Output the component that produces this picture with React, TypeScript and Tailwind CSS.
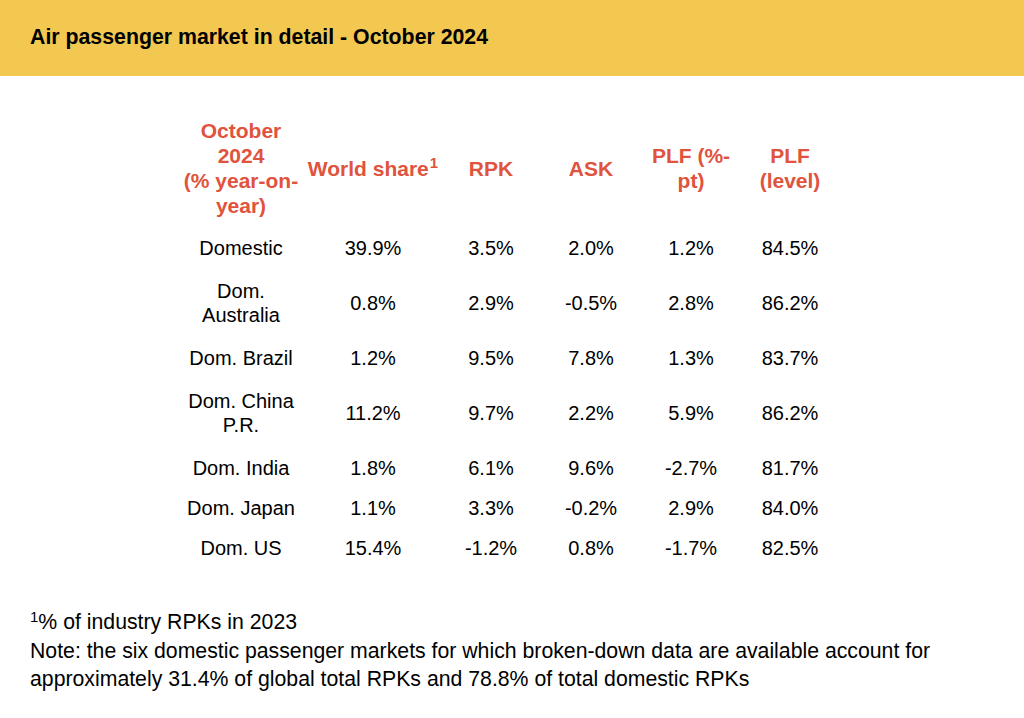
import React from "react"

type Row = {
  label: React.ReactNode
  tall?: boolean
  values: string[]
}

const rows: Row[] = [
  { label: "Domestic", values: ["39.9%", "3.5%", "2.0%", "1.2%", "84.5%"] },
  { label: <>Dom.<br />Australia</>, tall: true, values: ["0.8%", "2.9%", "-0.5%", "2.8%", "86.2%"] },
  { label: "Dom. Brazil", values: ["1.2%", "9.5%", "7.8%", "1.3%", "83.7%"] },
  { label: <>Dom. China<br />P.R.</>, tall: true, values: ["11.2%", "9.7%", "2.2%", "5.9%", "86.2%"] },
  { label: "Dom. India", values: ["1.8%", "6.1%", "9.6%", "-2.7%", "81.7%"] },
  { label: "Dom. Japan", values: ["1.1%", "3.3%", "-0.2%", "2.9%", "84.0%"] },
  { label: "Dom. US", values: ["15.4%", "-1.2%", "0.8%", "-1.7%", "82.5%"] },
]

const headers: React.ReactNode[] = [
  <>October<br />2024<br />(% year-on-<br />year)</>,
  <>World share<sup className="text-[15px] relative -top-[8px] ml-[1px]">1</sup></>,
  "RPK",
  "ASK",
  <>PLF (%-<br />pt)</>,
  <>PLF<br />(level)</>,
]

export default function App() {
  return (
    <div className="w-[1024px] h-[718px] bg-white text-black font-['Liberation_Sans',Arial,sans-serif] overflow-hidden">
      <div className="h-[76px] bg-[#F2C851] flex items-center px-[30px]">
        <h1 className="text-[21.3px] font-bold leading-none">Air passenger market in detail - October 2024</h1>
      </div>

      <div className="mt-[32px] ml-[180px] grid grid-cols-[122px_142px_94px_106px_94px_104px]">
        {headers.map((h, i) => (
          <div key={i} className="h-[120px] flex items-center justify-center text-center text-[21px] leading-[25px] font-bold text-[#E0533D] whitespace-nowrap">
            <span>{h}</span>
          </div>
        ))}
        {rows.map((r, ri) => (
          <React.Fragment key={ri}>
            <div className={`${r.tall ? "h-[70px]" : "h-[40px]"} flex items-center justify-center text-center text-[20px] leading-[24px] whitespace-nowrap`}>
              <span>{r.label}</span>
            </div>
            {r.values.map((v, vi) => (
              <div key={vi} className={`${r.tall ? "h-[70px]" : "h-[40px]"} flex items-center justify-center text-[20px] leading-[24px] whitespace-nowrap`}>
                {v}
              </div>
            ))}
          </React.Fragment>
        ))}
      </div>

      <div className="mt-[40px] px-[30px] text-[21.25px] leading-[28.5px]">
        <p><sup className="text-[15px] relative -top-[7px]">1</sup>% of industry RPKs in 2023</p>
        <p>Note: the six domestic passenger markets for which broken-down data are available account for</p>
        <p>approximately 31.4% of global total RPKs and 78.8% of total domestic RPKs</p>
      </div>
    </div>
  )
}
